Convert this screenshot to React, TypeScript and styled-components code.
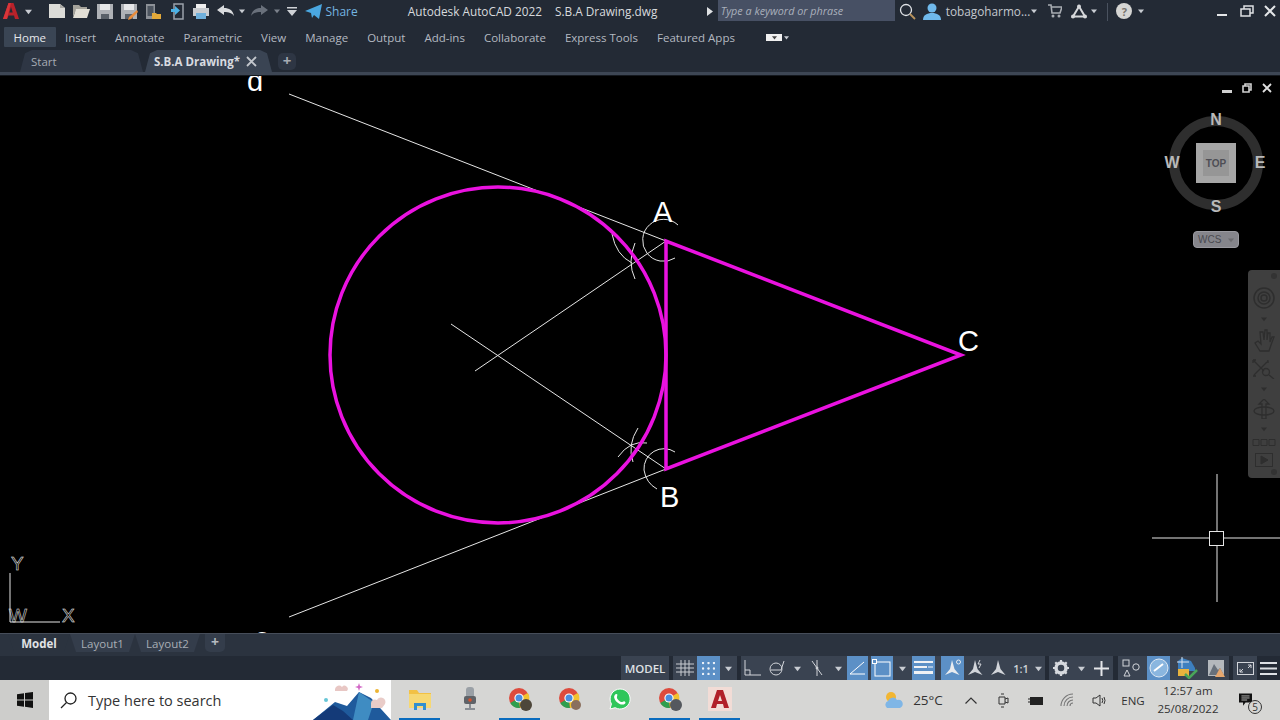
import React from 'react';
import styled, { createGlobalStyle } from 'styled-components';

const GlobalStyle = createGlobalStyle`
  html, body { margin: 0; padding: 0; background: #000; overflow: hidden; }
  body { font-family: "Open Sans", "Noto Sans", sans-serif; }
`;

const Caret = ({ color = '#c8ccd2', size = 7 }: { color?: string; size?: number }) => (
  <svg width={size} height={size} viewBox="0 0 8 8"><path d="M0 2h8L4 7z" fill={color} /></svg>
);

const AutocadLogo = ({ size = 18 }: { size?: number }) => (
  <svg width={size} height={size} viewBox="0 0 18 18">
    <path d="M6.5 1h5L17 17h-4l-1-3.5H6.5L5 17H1z" fill="#b8222a" />
    <path d="M9 5l-1.6 5.5h3.3z" fill="#232a35" />
    <path d="M6.5 1h2.4L5 17H1z" fill="#d8363a" />
  </svg>
);

const NewFile = () => (
  <svg width="18" height="16" viewBox="0 0 18 16"><path d="M1 1h11l5 4v10H1z" fill="#dcdcd8" /><path d="M12 1l5 4h-5z" fill="#a9a9a5" /></svg>
);
const OpenFile = () => (
  <svg width="18" height="16" viewBox="0 0 18 16"><path d="M1 2h6l2 2h6v3H4L1 14z" fill="#a5a39b" /><path d="M4 6h14l-3 9H1z" fill="#e2dfd6" /></svg>
);
const SaveFile = ({ pencil }: { pencil?: boolean }) => (
  <svg width="18" height="17" viewBox="0 0 18 17">
    <path d="M1 1h16v15H1z" fill="#aeb1b6" />
    <path d="M4 1h10v6H4z" fill="#e6e7e9" />
    <path d="M5 11h8v5H5z" fill="#596069" />
    {pencil && <path d="M17 7l1 2-7 7-3 1 1-3z" fill="#e88b3a" />}
  </svg>
);
const OpenWeb = () => (
  <svg width="16" height="17" viewBox="0 0 16 17"><path d="M1 1h9v15H1z" fill="#8d9198" /><path d="M2.500 3h6v10h-6z" fill="#4d5560" /><path d="M7 10h4l1 1h4v5H7z" fill="#e3a93a" /></svg>
);
const ShareWeb = () => (
  <svg width="13" height="17" viewBox="0 0 13 17"><path d="M3 1h9v15H3z" fill="none" stroke="#9aa1aa" strokeWidth="1.500" /><path d="M0 6h4V3l5 4.500L4 12V9H0z" fill="#4db2e6" /></svg>
);
const Printer = () => (
  <svg width="18" height="17" viewBox="0 0 18 17"><path d="M4 1h10v4H4z" fill="#eee" /><path d="M1 5h16v8H1z" fill="#c9ccd0" /><path d="M4 10h10v6H4z" fill="#6fb0dc" /></svg>
);

const ArrowSvg = styled.svg<{ $flip?: boolean }>`
  transform: ${({ $flip }) => ($flip ? 'scaleX(-1)' : 'none')};
`;

const Arrow = ({ flip, color }: { flip?: boolean; color: string }) => (
  <ArrowSvg $flip={flip} width="17" height="12" viewBox="0 0 17 12">
    <path d="M0 5l7-5v3c5 0 9 2 10 8-2-3-5-4-10-4v3z" fill={color} />
  </ArrowSvg>
);
const Plane = () => (
  <svg width="17" height="15" viewBox="0 0 17 15"><path d="M0 7L17 0l-3 15-5-4-2 3-1-5z" fill="#4aa7e0" /></svg>
);
const Magnifier = () => (
  <svg width="17" height="17" viewBox="0 0 17 17"><circle cx="7" cy="7" r="5.500" fill="none" stroke="#dfe2e6" strokeWidth="1.300" /><path d="M11 11l5 5" stroke="#b8925c" strokeWidth="1.800" /></svg>
);
const UserIcon = () => (
  <svg width="18" height="17" viewBox="0 0 18 17"><circle cx="9" cy="5" r="4.500" fill="#6fb9ec" /><path d="M0 17c0-5 4-7 9-7s9 2 9 7z" fill="#6fb9ec" /></svg>
);
const Cart = () => (
  <svg width="14" height="14" viewBox="0 0 14 14"><path d="M0 1h3l1 8h8l2-6H4" fill="none" stroke="#a9adb3" strokeWidth="1.600" /><circle cx="5" cy="12" r="1.500" fill="#a9adb3" /><circle cx="11" cy="12" r="1.500" fill="#a9adb3" /></svg>
);
const Connect = () => (
  <svg width="16" height="15" viewBox="0 0 16 15"><path d="M8 2.500L2 12.500h12z" fill="none" stroke="#d5d7da" strokeWidth="2" /><circle cx="8" cy="2.500" r="2" fill="#d5d7da" /><circle cx="2" cy="12.500" r="2" fill="#d5d7da" /><circle cx="14" cy="12.500" r="2" fill="#d5d7da" /></svg>
);

const AppShell = styled.div`
  width: 1280px;
  height: 720px;
  display: flex;
  flex-direction: column;
  background: #232a35;
  color: #c2c6cc;
  overflow: hidden;
`;

const TitleBar = styled.div`
  height: 24px;
  display: flex;
  align-items: flex-start;
  flex: none;
`;

const Slot = styled.div<{ $w: number }>`
  flex: 0 0 ${({ $w }) => $w}px;
  height: 22px;
  display: flex;
  align-items: center;
  justify-content: center;
`;

const ShareText = styled.span`
  height: 22px;
  display: flex;
  align-items: center;
  font-size: 12px;
  color: #74b5e2;
  margin-left: 3px;
`;

const AppTitle = styled.div`
  flex: 0 0 294px;
  margin-left: 50px;
  height: 22px;
  display: flex;
  align-items: center;
  gap: 13px;
  font-size: 11.800px;
  white-space: nowrap;
  color: #d8dade;
`;

const SearchBox = styled.div`
  flex: 0 0 177px;
  height: 21px;
  box-sizing: border-box;
  padding-left: 3px;
  display: flex;
  align-items: center;
  background: #475064;
  color: #a9afbb;
  font-size: 10.800px;
  font-style: italic;
  white-space: nowrap;
`;

const UserName = styled.span`
  height: 22px;
  display: flex;
  align-items: center;
  font-size: 11.800px;
  color: #c4c8ce;
  white-space: nowrap;
  flex: 0 0 84px;
  margin-left: 3px;
`;

const Divider = styled.div`
  flex: 0 0 1px;
  height: 18px;
  margin: 1px 0 0;
  background: #4a525f;
`;

const HelpDot = styled.div`
  width: 16px;
  height: 16px;
  border-radius: 50%;
  background: #d5d5d3;
  color: #77736b;
  font-size: 11px;
  font-weight: 700;
  display: flex;
  align-items: center;
  justify-content: center;
`;

const MinimizeGlyph = styled.svg<{ $drop: number }>`
  margin-top: ${({ $drop }) => $drop}px;
`;

const RibbonTabs = styled.div`
  height: 26px;
  flex: none;
  display: flex;
  align-items: flex-start;
  box-sizing: border-box;
  padding: 3px 0 0 4px;
`;

const RibbonTab = styled.div<{ $active?: boolean }>`
  height: 20px;
  padding: 0 9.500px;
  display: flex;
  align-items: center;
  font-size: 11.500px;
  white-space: nowrap;
  border-radius: 1px;
  color: ${({ $active }) => ($active ? '#e6e8eb' : '#b4b9c1')};
  background: ${({ $active }) => ($active ? '#3a4554' : 'transparent')};
`;

const PanelSwitch = styled.div`
  width: 16px;
  height: 7px;
  margin: 7px 2px 0 22px;
  background: #f0f0f0;
  display: flex;
  align-items: center;
  justify-content: center;
`;

const PanelCaret = styled.div`
  height: 20px;
  width: 8px;
  display: flex;
  align-items: center;
`;

const FileTabs = styled.div`
  height: 22px;
  flex: none;
  display: flex;
  align-items: stretch;
  padding-left: 20px;
`;

const FileTab = styled.div<{ $active?: boolean; $w: number }>`
  flex: 0 0 ${({ $w }) => $w}px;
  box-sizing: border-box;
  margin-right: 2px;
  padding-left: ${({ $active }) => ($active ? 9 : 11)}px;
  display: flex;
  align-items: center;
  font-size: 11.500px;
  font-weight: ${({ $active }) => ($active ? 700 : 400)};
  color: ${({ $active }) => ($active ? '#d8dbe0' : '#a6abb3')};
  background: ${({ $active }) => ($active ? '#3a4453' : '#2e3644')};
  clip-path: polygon(0 100%, 5px 15%, 12px 0, calc(100% - 12px) 0, calc(100% - 5px) 15%, 100% 100%);
  white-space: nowrap;
`;

const TabClose = styled.span`
  margin-left: 6px;
  display: flex;
`;

const PlusTab = styled.div`
  flex: 0 0 18px;
  margin: 3px 0 2px 4px;
  border-radius: 5px;
  background: #2e3644;
  color: #a6abb3;
  font-size: 15px;
  font-weight: 700;
  line-height: 15px;
  text-align: center;
`;

const Strip = styled.div`
  height: 4px;
  flex: none;
  background: #3d4654;
  border-bottom: 1px solid #14181e;
  box-sizing: border-box;
`;

const Canvas = styled.div`
  position: relative;
  flex: 1;
  min-height: 0;
  background: #000;
  overflow: hidden;
`;

const Drawing = styled.svg`
  display: block;
  width: 1280px;
  height: 557px;
`;

const PointLabel = styled.text`
  font-family: "Liberation Sans", Arial, sans-serif;
  font-size: 29px;
  fill: #fff;
`;

const AxisLabel = styled.text`
  font-family: "Liberation Sans", Arial, sans-serif;
  font-size: 19px;
  fill: none;
  stroke: #f0f0f0;
  stroke-width: 0.500px;
`;

const ViewportControls = styled.div`
  position: absolute;
  top: 7px;
  right: 8px;
  display: flex;
  align-items: center;
  gap: 10px;
`;

const ViewCube = styled.div`
  position: absolute;
  top: 36px;
  left: 1162px;
  width: 108px;
  height: 102px;
`;

const CubeRing = styled.div`
  position: absolute;
  left: 7px;
  top: 4px;
  width: 94px;
  height: 94px;
  box-sizing: border-box;
  border: 10px solid #2e2e2e;
  border-radius: 50%;
`;

const CubeFace = styled.div`
  position: absolute;
  left: 34px;
  top: 31px;
  width: 40px;
  height: 40px;
  box-sizing: border-box;
  border: 7px solid #a6a6a6;
  background: #969696;
  color: #4e4e55;
  font-family: "Liberation Sans", Arial, sans-serif;
  font-size: 10px;
  font-weight: 700;
  display: flex;
  align-items: center;
  justify-content: center;
`;

const CubeLetter = styled.span<{ $x: number; $y: number }>`
  position: absolute;
  left: ${({ $x }) => $x}px;
  top: ${({ $y }) => $y}px;
  width: 20px;
  text-align: center;
  font-family: "Liberation Sans", Arial, sans-serif;
  font-size: 16px;
  line-height: 18px;
  font-weight: 700;
  color: #b9b9b9;
`;

const WcsPill = styled.div`
  position: absolute;
  top: 155px;
  left: 1193px;
  width: 46px;
  height: 17px;
  box-sizing: border-box;
  padding-left: 4px;
  border-radius: 4px;
  background: #85858b;
  color: #4a4a50;
  border: 1px solid #9a9aa0;
  font-family: "Liberation Sans", Arial, sans-serif;
  font-size: 10px;
  display: flex;
  align-items: center;
  gap: 7px;
`;

const NavBar = styled.div`
  position: absolute;
  top: 194px;
  left: 1248px;
  width: 32px;
  height: 208px;
  box-sizing: border-box;
  padding-top: 17px;
  border-radius: 4px 0 0 4px;
  background: #3f3f3f;
  display: flex;
  flex-direction: column;
  align-items: center;
  gap: 7px;
`;

const NavDot = styled.span<{ $bottom?: boolean }>`
  position: absolute;
  right: 3px;
  ${({ $bottom }) => ($bottom ? 'bottom: 3px;' : 'top: 3px;')}
  width: 6px;
  height: 6px;
  border-radius: 50%;
  background: #333;
`;

const LayoutBar = styled.div`
  height: 23px;
  flex: none;
  display: flex;
  align-items: stretch;
  box-sizing: border-box;
  border-top: 1px solid #464d59;
  padding: 0 0 4px 8px;
  background: #2b333f;
`;

const LayoutTab = styled.div<{ $active?: boolean }>`
  flex: 0 0 ${({ $active }) => ($active ? 62 : 65)}px;
  display: flex;
  align-items: center;
  justify-content: center;
  font-size: 11.500px;
  font-weight: ${({ $active }) => ($active ? 700 : 400)};
  color: ${({ $active }) => ($active ? '#e0e2e5' : '#a8adb5')};
  background: ${({ $active }) => ($active ? '#2b333f' : '#343d4b')};
  clip-path: polygon(0 0, 100% 0, calc(100% - 6px) 100%, 6px 100%);
`;

const LayoutPlus = styled.div`
  flex: 0 0 20px;
  margin-left: 5px;
  border-radius: 0 0 5px 5px;
  background: #343d4b;
  color: #b6bac0;
  font-size: 14px;
  font-weight: 700;
  line-height: 15px;
  text-align: center;
`;

const StatusBar = styled.div`
  height: 24px;
  flex: none;
  display: flex;
  justify-content: flex-end;
  background: #232a35;
`;

const TileGroup = styled.div<{ $gap?: number }>`
  display: flex;
  align-items: stretch;
  background: #3a4351;
  margin-left: ${({ $gap }) => $gap ?? 4}px;
`;

const Tile = styled.div<{ $w: number; $on?: boolean; $bare?: boolean }>`
  flex: 0 0 ${({ $w }) => $w}px;
  display: flex;
  align-items: center;
  justify-content: center;
  background: ${({ $on, $bare }) => ($on ? '#5c90c6' : $bare ? '#232a35' : 'transparent')};
  color: #d6d9de;
`;

const ModelLabel = styled.span`
  font-size: 11.500px;
  font-weight: 600;
  color: #dfe1e4;
`;

const ScaleLabel = styled.span`
  font-size: 11px;
  font-weight: 600;
  color: #cfd2d7;
`;

const Taskbar = styled.div`
  height: 40px;
  flex: none;
  display: flex;
  align-items: stretch;
  background: #d6d6d4;
  color: #222;
`;

const StartButton = styled.div`
  flex: 0 0 49px;
  display: flex;
  align-items: center;
  justify-content: center;
  background: #cdcdcb;
`;

const TaskSearch = styled.div`
  flex: 0 0 342px;
  display: flex;
  align-items: center;
  box-sizing: border-box;
  padding-left: 11px;
  background: #fff;
  overflow: hidden;
`;

const SearchHint = styled.span`
  margin-left: 11px;
  flex: 1;
  font-size: 14.500px;
  color: #333;
  white-space: nowrap;
`;

const ArtSvg = styled.svg`
  flex: none;
`;

const TaskIcons = styled.div`
  flex: 0 0 488px;
  padding-left: 8px;
  box-sizing: border-box;
  display: flex;
`;

const TaskIcon = styled.div<{ $open?: boolean }>`
  flex: 0 0 41px;
  margin-right: 9px;
  box-sizing: border-box;
  display: flex;
  align-items: center;
  justify-content: center;
  border-bottom: 2px solid ${({ $open }) => ($open ? '#0a6cbe' : 'transparent')};
`;

const Tray = styled.div`
  flex: 1;
  display: flex;
  align-items: center;
  color: #333;
`;

const TraySlot = styled.div<{ $w: number; $size?: number }>`
  flex: 0 0 ${({ $w }) => $w}px;
  display: flex;
  align-items: center;
  justify-content: center;
  font-size: ${({ $size }) => $size ?? 12}px;
`;

const Clock = styled.div`
  flex: 0 0 66px;
  margin-left: 4px;
  text-align: center;
  font-size: 11.500px;
  line-height: 18px;
  white-space: nowrap;
`;

const NotifyWrap = styled.div`
  position: relative;
  margin-left: 18px;
  display: flex;
`;

const NotifyBadge = styled.span`
  position: absolute;
  left: 9px;
  top: 7px;
  width: 14px;
  height: 14px;
  box-sizing: border-box;
  border: 1px solid #333;
  border-radius: 50%;
  background: #d6d6d4;
  font-size: 10px;
  line-height: 12px;
  text-align: center;
`;

const TitleSlots: { w: number; node: React.ReactNode }[] = [
  { w: 22, node: <AutocadLogo /> },
  { w: 12, node: <Caret /> },
  { w: 10.500, node: null },
  { w: 24, node: <NewFile /> },
  { w: 24, node: <OpenFile /> },
  { w: 24, node: <SaveFile /> },
  { w: 24, node: <SaveFile pencil /> },
  { w: 24, node: <OpenWeb /> },
  { w: 25, node: <ShareWeb /> },
  { w: 22, node: <Printer /> },
  { w: 27, node: <Arrow color="#d9dbde" /> },
  { w: 7, node: <Caret size={6} /> },
  { w: 28, node: <Arrow flip color="#69707b" /> },
  { w: 6, node: <Caret size={6} color="#7b818b" /> },
  { w: 24, node: <svg width="10" height="9" viewBox="0 0 10 9"><path d="M0 0h10v1.500H0zM0 3h10L5 9z" fill="#cfd2d6" /></svg> },
  { w: 19, node: <Plane /> },
];

const ribbonTabs = ['Insert', 'Annotate', 'Parametric', 'View', 'Manage', 'Output', 'Add-ins', 'Collaborate', 'Express Tools', 'Featured Apps'];

const Stroke = ({ w, h, children, color = '#d2d5da', sw = 1 }: { w: number; h: number; children: React.ReactNode; color?: string; sw?: number }) => (
  <svg width={w} height={h} viewBox={`0 0 ${w} ${h}`} fill="none" stroke={color} strokeWidth={sw}>{children}</svg>
);

const GridIcon = () => (
  <Stroke w={18} h={16} color="#c8ccd2"><path d="M5 0v16M9 0v16M13 0v16M0 4h18M0 8h18M0 12h18" /></Stroke>
);
const SnapIcon = () => (
  <svg width="13" height="13" viewBox="0 0 13 13" fill="#eef3f9">
    {[1, 6.500, 12].flatMap(x => [1, 6.500, 12].map(y => <circle key={`${x}-${y}`} cx={x} cy={y} r="1.200" />))}
  </svg>
);
const OrthoIcon = () => (
  <Stroke w={18} h={16}><path d="M1 0v15h16M1 10h5v5" /></Stroke>
);
const PolarIcon = () => (
  <Stroke w={16} h={16}><circle cx="7" cy="9" r="6" /><path d="M2 10h10l3-9" /></Stroke>
);
const OsnapIcon = () => (
  <Stroke w={12} h={16}><path d="M1 1l10 14M6 0v16" /><circle cx="6" cy="8" r="1" fill="#d2d5da" /></Stroke>
);
const AngleIcon = () => (
  <Stroke w={16} h={14} color="#fff"><path d="M0 13h15M0 13L14 1" /></Stroke>
);
const ObjectIcon = () => (
  <Stroke w={20} h={18} color="#fff"><rect x="3" y="3" width="15" height="14" /><rect x="0.500" y="0.500" width="4" height="4" fill="#5c90c6" /></Stroke>
);
const LineweightIcon = () => (
  <svg width="19" height="14" viewBox="0 0 19 14" fill="#f0f2f5"><path d="M0 0h19v2H0zM0 5h13v2H0zM0 10h19v3H0z" /><path d="M14 5h5v2h-5z" fill="#a9c4e2" /></svg>
);
const Annot = ({ badge, color = '#e8ebef' }: { badge?: React.ReactNode; color?: string }) => (
  <svg width="17" height="18" viewBox="0 0 17 18">
    <path d="M8 1l2.500 9 5 6-7.500-3-7 3 5-6z" fill={color} />
    {badge}
  </svg>
);
const Gear = () => (
  <svg width="16" height="16" viewBox="0 0 16 16">
    <circle cx="8" cy="8" r="5" fill="none" stroke="#d6d9de" strokeWidth="3.500" />
    <path d="M8 0v16M0 8h16M2.300 2.300l11.400 11.400M13.700 2.300L2.300 13.700" stroke="#d6d9de" strokeWidth="2.200" strokeDasharray="2.400 11.200" />
  </svg>
);
const Shapes = () => (
  <Stroke w={18} h={18}><rect x="1" y="1" width="6" height="6" /><circle cx="14" cy="8" r="3.200" /><path d="M5 11l3 6H2z" /></Stroke>
);
const HardwareIcon = () => (
  <svg width="20" height="20" viewBox="0 0 20 20" fill="none">
    <circle cx="10" cy="10" r="9" fill="#8ab6df" stroke="#dfe9f3" />
    <path d="M5 13L14 6" stroke="#fff" strokeWidth="2" />
  </svg>
);
const IsolateIcon = () => (
  <svg width="21" height="22" viewBox="0 0 21 22">
    <path d="M5 1l9 3 4 7v3H1V4z" fill="#3d7fbf" />
    <path d="M1 12h11v7H1z" fill="#e8b33e" />
    <path d="M0 5h12M5 0v11" stroke="#d8e3ef" />
    <path d="M8 17l4 4 8-8" fill="none" stroke="#4aa65a" strokeWidth="2.500" />
  </svg>
);
const GraphicsIcon = () => (
  <svg width="17" height="17" viewBox="0 0 17 17">
    <path d="M0 0h16v16H0z" fill="#b4b8bd" />
    <path d="M1 15l5-11 4 6 2-2 4 7z" fill="#68707b" />
    <path d="M12 8l5 9H7z" fill="#e5a66e" />
  </svg>
);
const Fullscreen = () => (
  <Stroke w={17} h={13}><rect x="0.500" y="0.500" width="16" height="12" /><path d="M3 10l3-3M3 10h3M3 10V7M14 3l-3 3M14 3h-3M14 3v3" /></Stroke>
);
const Hamburger = () => (
  <svg width="17" height="13" viewBox="0 0 17 13" fill="#dcdfe3"><path d="M0 0h17v2H0zM0 5.500h17v2H0zM0 11h17v2H0z" /></svg>
);

const ChromeIcon = ({ badge }: { badge?: React.ReactNode }) => (
  <svg width="24" height="24" viewBox="0 0 24 24">
    <circle cx="11" cy="11" r="10" fill="#dd4b3e" />
    <path d="M11 11L2.300 16a10 10 0 0 0 9.700 5z" fill="#2f9e4f" />
    <path d="M11 11l1 10A10 10 0 0 0 21 8.500a10 10 0 0 0-1.300-2.500z" fill="#f3c22f" />
    <circle cx="11" cy="11" r="4.600" fill="#fff" />
    <circle cx="11" cy="11" r="3.500" fill="#4a8de0" />
    {badge}
  </svg>
);

const FolderIcon = () => (
  <svg width="22" height="21" viewBox="0 0 22 21">
    <path d="M0 1h8l2 3h12v15H0z" fill="#f2c144" />
    <path d="M0 5h22v14H0z" fill="#f6d873" />
    <path d="M5 14h12v7h-3v-4H8v4H5z" fill="#2f8fd0" />
  </svg>
);

const MicIcon = () => (
  <svg width="14" height="24" viewBox="0 0 14 24">
    <rect x="3" y="0" width="8" height="11" rx="3" fill="#9aa0a6" />
    <rect x="1" y="9" width="12" height="8" rx="2" fill="#5f6368" />
    <circle cx="7" cy="13" r="1.800" fill="#d9512c" />
    <path d="M6 17h2v4h4v2H2v-2h4z" fill="#8a8f95" />
  </svg>
);

const WhatsappIcon = () => (
  <svg width="22" height="22" viewBox="0 0 22 22">
    <path d="M11 1a10 10 0 0 0-8.600 15L1 21l5.200-1.300A10 10 0 1 0 11 1z" fill="#2fc65a" stroke="#fff" />
    <path d="M7.500 6c2 0-.3 3 .8 4.700 1 1.500 2.300 2.700 3.800 3.300 1.500.5 2.400-1.500 3.600-.6 1 .8 1 1.500.2 2.300-1.500 1.300-3.700 1-5.700 0-2.500-1.300-4.500-3.500-5-6C4.800 8 6 6 7.500 6z" fill="#fff" />
  </svg>
);

const SearchArt = () => (
  <ArtSvg width="78" height="40" viewBox="0 0 78 40">
    <path d="M0 40L22 22l12 4 12-14 12 6 20 22z" fill="#1f5a9c" />
    <path d="M0 40L20 25l10 6 10 9z" fill="#143a78" />
    <path d="M46 12l10 7 5 3-6 18H40z" fill="#3f8cc2" />
    <path d="M22 9a4 4 0 0 1 7-2 3 3 0 0 1 5 4H22z" fill="#e8c7c4" />
    <path d="M58 23a4 4 0 0 1 6-3 4 4 0 0 1 8 4l-3 4H58z" fill="#e9ccc8" />
    <path d="M46 3l1 3 3 1-3 1-1 3-1-3-3-1 3-1z" fill="#d267c6" />
    <circle cx="64" cy="11" r="2" fill="#edb534" />
    <circle cx="13" cy="20" r="2" fill="#66c6d6" />
  </ArtSvg>
);

export default function App() {
  return (
    <AppShell>
      <GlobalStyle />
      <TitleBar>
        {TitleSlots.map((slot, i) => (
          <Slot key={i} $w={slot.w}>{slot.node}</Slot>
        ))}
        <ShareText>Share</ShareText>
        <AppTitle>
          <span>Autodesk AutoCAD 2022</span>
          <span>S.B.A Drawing.dwg</span>
        </AppTitle>
        <Slot $w={16}>
          <svg width="6" height="9" viewBox="0 0 6 9"><path d="M0 0l6 4.500L0 9z" fill="#dfe1e4" /></svg>
        </Slot>
        <SearchBox>Type a keyword or phrase</SearchBox>
        <Slot $w={26}><Magnifier /></Slot>
        <Slot $w={22}><UserIcon /></Slot>
        <UserName>tobagoharmo...</UserName>
        <Slot $w={7}><Caret size={6} /></Slot>
        <Slot $w={6} />
        <Slot $w={24}><Cart /></Slot>
        <Slot $w={24}><Connect /></Slot>
        <Slot $w={6}><Caret size={6} /></Slot>
        <Slot $w={6} />
        <Slot $w={9}><Divider /></Slot>
        <Slot $w={24}><HelpDot>?</HelpDot></Slot>
        <Slot $w={10}><Caret size={6} /></Slot>
        <Slot $w={63} />
        <Slot $w={26}>
          <MinimizeGlyph $drop={7} width="10" height="2" viewBox="0 0 10 2"><path d="M0 0h10v2H0z" fill="#e4e6e8" /></MinimizeGlyph>
        </Slot>
        <Slot $w={24}>
          <Stroke w={14} h={12} color="#dfe1e4" sw={1.500}><path d="M1 4h9v7H1zM4 4V1h9v7h-3" /></Stroke>
        </Slot>
        <Slot $w={22}>
          <Stroke w={12} h={12} color="#e4e6e8" sw={2}><path d="M1 1l10 10M11 1L1 11" /></Stroke>
        </Slot>
      </TitleBar>

      <RibbonTabs>
        <RibbonTab $active>Home</RibbonTab>
        {ribbonTabs.map(t => <RibbonTab key={t}>{t}</RibbonTab>)}
        <PanelSwitch><Caret size={5} color="#444" /></PanelSwitch>
        <PanelCaret><Caret size={5} /></PanelCaret>
      </RibbonTabs>

      <FileTabs>
        <FileTab $w={123}>Start</FileTab>
        <FileTab $w={127} $active>
          S.B.A Drawing*
          <TabClose>
            <Stroke w={11} h={11} color="#c2c6cc" sw={1.800}><path d="M1 1l9 9M10 1l-9 9" /></Stroke>
          </TabClose>
        </FileTab>
        <PlusTab>+</PlusTab>
      </FileTabs>
      <Strip />

      <Canvas>
        <Drawing viewBox="0 76 1280 557">
          <g stroke="#e6e6e6" strokeWidth="1" fill="none">
            <path d="M289 94L666 241M289 617L666 469" />
            <path d="M475 371L666 241M451 324L666 469" />
            <path d="M678 225A21 21 0 1 0 675 258" />
            <path d="M612 234Q616 255 632 263M635 243Q627 262 635 279" />
            <path d="M675 452A20 20 0 0 0 644 470Q646 483 657 489" />
            <path d="M638 428Q627 445 633 462M618 457Q630 440 647 443" />
            <path d="M1152 538H1209M1223 538H1280M1217 474V531M1217 545V602" />
            <rect x="1209.500" y="531.500" width="14" height="14" />
            <path d="M10 573V622H60" />
          </g>
          <g stroke="#ea12e0" strokeWidth="3.500" fill="none">
            <circle cx="498" cy="355" r="168" />
            <path d="M666 241V469L961 355Z" />
          </g>
          <PointLabel x="653" y="222">A</PointLabel>
          <PointLabel x="660" y="507">B</PointLabel>
          <PointLabel x="958" y="351">C</PointLabel>
          <PointLabel x="247" y="91">d</PointLabel>
          <PointLabel x="254" y="648">e</PointLabel>
          <AxisLabel x="11" y="570">Y</AxisLabel>
          <AxisLabel x="9" y="622">W</AxisLabel>
          <AxisLabel x="62" y="622">X</AxisLabel>
        </Drawing>

        <ViewportControls>
          <MinimizeGlyph $drop={7} width="10" height="3" viewBox="0 0 10 3"><path d="M0 0h10v3H0z" fill="#d0d0d0" /></MinimizeGlyph>
          <Stroke w={10} h={10} color="#d0d0d0" sw={1.600}><path d="M1 3h6v6H1zM3 3V1h6v6H7" /></Stroke>
          <Stroke w={10} h={10} color="#e0e0e0" sw={1.800}><path d="M1 1l8 8M9 1L1 9" /></Stroke>
        </ViewportControls>

        <ViewCube>
          <CubeRing />
          <CubeFace>TOP</CubeFace>
          <CubeLetter $x={44} $y={-1}>N</CubeLetter>
          <CubeLetter $x={44} $y={86}>S</CubeLetter>
          <CubeLetter $x={88} $y={42}>E</CubeLetter>
          <CubeLetter $x={0} $y={42}>W</CubeLetter>
        </ViewCube>
        <WcsPill>WCS <Caret size={6} color="#6c6c70" /></WcsPill>

        <NavBar>
          <NavDot />
          <Stroke w={24} h={22} color="#2e2e2e" sw={1.500}><circle cx="12" cy="11" r="10" /><circle cx="12" cy="11" r="6" /><circle cx="12" cy="11" r="3" /></Stroke>
          <Caret size={6} color="#2e2e2e" />
          <Stroke w={24} h={23} color="#2e2e2e" sw={1.300}><path d="M3 14l5 8h9l2-6 3-8h-2l-2 5V4h-2l-1 7V1h-2l-1 10-1-8H8l1 12-3-3z" /></Stroke>
          <Stroke w={24} h={20} color="#2e2e2e" sw={1.300}><path d="M2 2l10 10M2 16L15 3M1 1h3M1 1v3M15 2h1v2M1 17h3" /><circle cx="14" cy="13" r="3.500" /><path d="M17 16l5 4" /></Stroke>
          <Caret size={6} color="#2e2e2e" />
          <Stroke w={24} h={20} color="#2e2e2e" sw={1.300}><path d="M10 5v15h4V5h3l-5-5-5 5z" /><ellipse cx="12" cy="12" rx="10" ry="4" /></Stroke>
          <Caret size={6} color="#2e2e2e" />
          <Stroke w={24} h={7} color="#2e2e2e"><path d="M1 0.500h6v6H1zM9 0.500h6v6H9zM17 0.500h6v6h-6z" /></Stroke>
          <Stroke w={18} h={14} color="#2e2e2e"><rect x="0.500" y="0.500" width="17" height="13" /><path d="M6 3l7 4-7 4z" fill="#2e2e2e" /></Stroke>
          <NavDot $bottom />
        </NavBar>
      </Canvas>

      <LayoutBar>
        <LayoutTab $active>Model</LayoutTab>
        <LayoutTab>Layout1</LayoutTab>
        <LayoutTab>Layout2</LayoutTab>
        <LayoutPlus>+</LayoutPlus>
      </LayoutBar>

      <StatusBar>
        <TileGroup><Tile $w={48}><ModelLabel>MODEL</ModelLabel></Tile></TileGroup>
        <TileGroup>
          <Tile $w={24}><GridIcon /></Tile>
          <Tile $w={23} $on><SnapIcon /></Tile>
          <Tile $w={17}><Caret /></Tile>
        </TileGroup>
        <TileGroup>
          <Tile $w={23}><OrthoIcon /></Tile>
          <Tile $w={26}><PolarIcon /></Tile>
          <Tile $w={14}><Caret /></Tile>
          <Tile $w={26}><OsnapIcon /></Tile>
          <Tile $w={17}><Caret /></Tile>
          <Tile $w={21} $on><AngleIcon /></Tile>
          <Tile $w={3} />
          <Tile $w={22} $on><ObjectIcon /></Tile>
          <Tile $w={19}><Caret /></Tile>
          <Tile $w={23} $on><LineweightIcon /></Tile>
          <Tile $w={6} />
          <Tile $w={23} $on><Annot badge={<circle cx="14.500" cy="3" r="2" fill="none" stroke="#e8ebef" />} /></Tile>
          <Tile $w={22}><Annot badge={<path d="M13 1l-2 4h3l-2 4" fill="none" stroke="#d2d5da" />} color="#d2d5da" /></Tile>
          <Tile $w={24}><Annot color="#d2d5da" /></Tile>
          <Tile $w={22}><ScaleLabel>1:1</ScaleLabel></Tile>
          <Tile $w={13}><Caret /></Tile>
        </TileGroup>
        <TileGroup>
          <Tile $w={24}><Gear /></Tile>
          <Tile $w={17}><Caret /></Tile>
          <Tile $w={23}>
            <Stroke w={15} h={15} color="#e4e6e9" sw={2}><path d="M7.500 0v15M0 7.500h15" /></Stroke>
          </Tile>
        </TileGroup>
        <TileGroup $gap={5}>
          <Tile $w={25}><Shapes /></Tile>
          <Tile $w={4} />
          <Tile $w={23} $on><HardwareIcon /></Tile>
          <Tile $w={34}><IsolateIcon /></Tile>
          <Tile $w={25}><GraphicsIcon /></Tile>
        </TileGroup>
        <TileGroup>
          <Tile $w={24}><Fullscreen /></Tile>
        </TileGroup>
        <Tile $w={23} $bare><Hamburger /></Tile>
      </StatusBar>

      <Taskbar>
        <StartButton>
          <svg width="16" height="16" viewBox="0 0 16 16" fill="#111"><path d="M0 2.200l7-1v6.300H0zM8 1l8-1v7.500H8zM0 8.500h7v6.300l-7-1zM8 8.500h8V16l-8-1.200z" /></svg>
        </StartButton>
        <TaskSearch>
          <Stroke w={17} h={17} color="#222" sw={1.300}><circle cx="10.500" cy="6.500" r="5.500" /><path d="M6.500 10.500L1 16" /></Stroke>
          <SearchHint>Type here to search</SearchHint>
          <SearchArt />
        </TaskSearch>
        <TaskIcons>
          <TaskIcon $open><FolderIcon /></TaskIcon>
          <TaskIcon><MicIcon /></TaskIcon>
          <TaskIcon $open><ChromeIcon badge={<circle cx="18" cy="18" r="6" fill="#4d463a" />} /></TaskIcon>
          <TaskIcon><ChromeIcon badge={<circle cx="18" cy="18" r="5" fill="#8a6f5e" />} /></TaskIcon>
          <TaskIcon><WhatsappIcon /></TaskIcon>
          <TaskIcon $open><ChromeIcon badge={<circle cx="18" cy="18" r="6" fill="#54585e" />} /></TaskIcon>
          <TaskIcon $open>
            <svg width="24" height="24" viewBox="0 0 24 24">
              <path d="M0 0h24v24H0z" fill="#f2dcd6" />
              <path d="M9 3h6l6 18h-5l-1-4H9l-1 4H3z" fill="#b11f28" />
              <path d="M12 8l-2 6h4z" fill="#f2dcd6" />
            </svg>
          </TaskIcon>
        </TaskIcons>
        <Tray>
          <TraySlot $w={30}>
            <svg width="20" height="20" viewBox="0 0 20 20">
              <circle cx="7" cy="7" r="5" fill="#f2b632" />
              <path d="M3 18a4 4 0 0 1 1-7 5 5 0 0 1 9-1 4 4 0 0 1 3 8z" fill="#7fb6e6" />
            </svg>
          </TraySlot>
          <TraySlot $w={38} $size={13.500}>25°C</TraySlot>
          <TraySlot $w={8} />
          <TraySlot $w={32}>
            <Stroke w={12} h={7} color="#333" sw={1.200}><path d="M0.500 6.500L6 1l5.500 5.500" /></Stroke>
          </TraySlot>
          <TraySlot $w={32}>
            <Stroke w={11} h={15} color="#333"><path d="M1 4h6v7H1zM7 6l3-1v5l-3-1M3 1h3M3 14h3" /></Stroke>
          </TraySlot>
          <TraySlot $w={32}>
            <svg width="15" height="9" viewBox="0 0 15 9"><path d="M2 1h13v8H2z" fill="#222" /><path d="M0 3h2M0 6h2" stroke="#222" /></svg>
          </TraySlot>
          <TraySlot $w={32}>
            <Stroke w={14} h={14} color="#777" sw={1.100}><path d="M1 13A12 12 0 0 1 13 1M4 13A9 9 0 0 1 13 4M7 13a6 6 0 0 1 6-6M10 13a3 3 0 0 1 3-3" /></Stroke>
          </TraySlot>
          <TraySlot $w={32}>
            <Stroke w={14} h={13} color="#333"><path d="M1 4h3l4-3v11L4 9H1zM10 4q1.500 2.500 0 5M12 3q2 3.500 0 7" /></Stroke>
          </TraySlot>
          <TraySlot $w={36} $size={11.500}>ENG</TraySlot>
          <Clock>
            <div>12:57 am</div>
            <div>25/08/2022</div>
          </Clock>
          <NotifyWrap>
            <svg width="13" height="14" viewBox="0 0 16 16"><path d="M0 0h16v11H8l-3 4v-4H0z" fill="#111" /><path d="M3 3h10M3 5.500h10M3 8h7" stroke="#d6d6d4" /></svg>
            <NotifyBadge>5</NotifyBadge>
          </NotifyWrap>
        </Tray>
      </Taskbar>
    </AppShell>
  );
}
